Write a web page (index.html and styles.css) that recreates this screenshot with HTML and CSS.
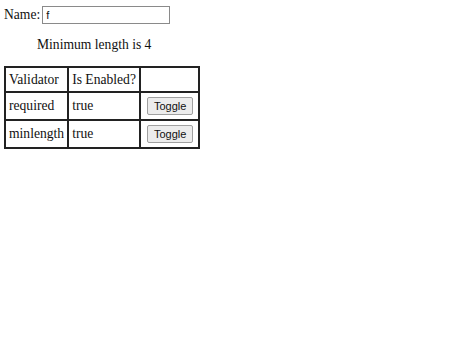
FILE: index.html
```html
<!DOCTYPE html>
<html>
<head>
<meta charset="utf-8">
<link rel="stylesheet" href="styles.css">
</head>
<body>
<div class="field">
  <label class="label" for="name">Name:</label>
  <input class="input" id="name" type="text" value="f">
</div>
<div class="error">Minimum length is 4</div>
<table class="grid">
  <tr><td>Validator</td><td>Is Enabled?</td><td></td></tr>
  <tr><td>required</td><td>true</td><td class="act"><button class="btn">Toggle</button></td></tr>
  <tr><td>minlength</td><td>true</td><td class="act"><button class="btn">Toggle</button></td></tr>
</table>
</body>
</html>
```
FILE: styles.css
```css
html, body { background: #fff; }
body {
  margin: 0;
  padding: 6px 4px;
  font-family: "Liberation Serif", "Times New Roman", serif;
  font-size: 13.6px;
  color: #111;
}
.field {
  display: flex;
  align-items: center;
  gap: 2px;
  height: 18px;
}
.input {
  box-sizing: border-box;
  width: 128px;
  height: 18px;
  margin: 0;
  padding: 0 3px;
  border: 1px solid #8a8a8a;
  font-family: "Liberation Sans", Arial, sans-serif;
  font-size: 11px;
  color: #111;
}
.error {
  margin: 13px 0 0 33px;
  height: 16px;
  line-height: 16px;
}
.grid {
  margin-top: 13px;
  border-collapse: collapse;
  border: 2px solid #222;
}
.grid td {
  border: 2px solid #222;
  padding: 0 3px;
  height: 23px;
  line-height: 16px;
}
.grid tr:not(:first-child) td { height: 26px; }
.grid td.act { padding: 0 5px 0 6px; }
.btn {
  box-sizing: border-box;
  height: 18px;
  margin: 0;
  padding: 0 6px;
  font-family: "Liberation Sans", Arial, sans-serif;
  font-size: 11px;
  color: #111;
  background: #ececec;
  border: 1px solid #a0a0a0;
  border-radius: 2px;
}
```
